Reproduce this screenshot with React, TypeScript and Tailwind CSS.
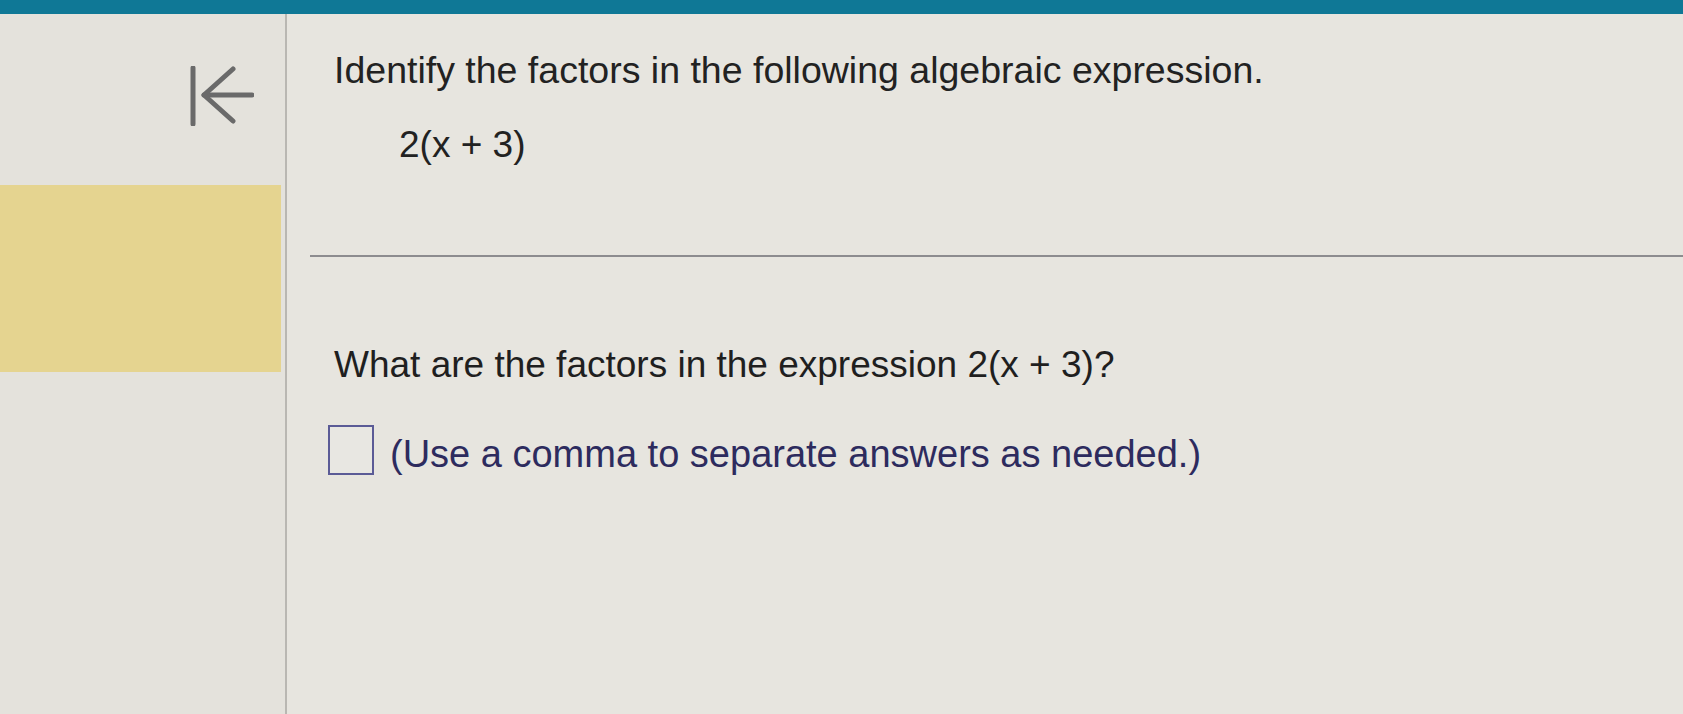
export default function App() {
  return (
    <div className="h-[714px] w-full overflow-hidden bg-[#e7e5df] flex flex-col" style={{ fontFamily: '"Liberation Sans", Arial, sans-serif' }}>
      <div className="h-[14px] bg-[#0f7896] shrink-0" />
      <div className="flex flex-1">
        <div className="w-[287px] shrink-0 bg-[#e4e2dc] border-r-2 border-[#b9b7b2]">
          <div className="h-[171px] pt-[52px] pl-[188px]">
            <svg className="block" width="66" height="60" viewBox="0 0 66 60" fill="none" stroke="#6a6a6a" strokeWidth="5" strokeLinecap="round">
              <line x1="5" y1="2" x2="5" y2="58" />
              <line x1="16" y1="29" x2="64" y2="29" />
              <polyline points="45,3 16,29 45,55" strokeLinejoin="round" />
            </svg>
          </div>
          <div className="h-[187px] w-[281px] bg-[#e5d490]" />
        </div>
        <div className="flex-1 pl-[47px] text-[37px]">
          <div className="mt-[34px] leading-[44px] text-[#222] text-[37.5px]">Identify the factors in the following algebraic expression.</div>
          <div className="mt-[31px] ml-[65px] leading-[44px] text-[#222]">2(x + 3)</div>
          <div className="mt-[88px] -ml-[24px] border-t-2 border-[#8d8c8f]" />
          <div className="mt-[86px] leading-[44px] text-[#1f1f1f]">What are the factors in the expression 2(x + 3)?</div>
          <div className="mt-[37px] -ml-[6px] flex items-center gap-[16px]">
            <div className="w-[46px] h-[50px] border-2 border-[#5b5b96] bg-[#e8e7e2]" />
            <div className="mt-[8px] leading-[44px] text-[38px] text-[#2d2b5e]">(Use a comma to separate answers as needed.)</div>
          </div>
        </div>
      </div>
    </div>
  );
}
